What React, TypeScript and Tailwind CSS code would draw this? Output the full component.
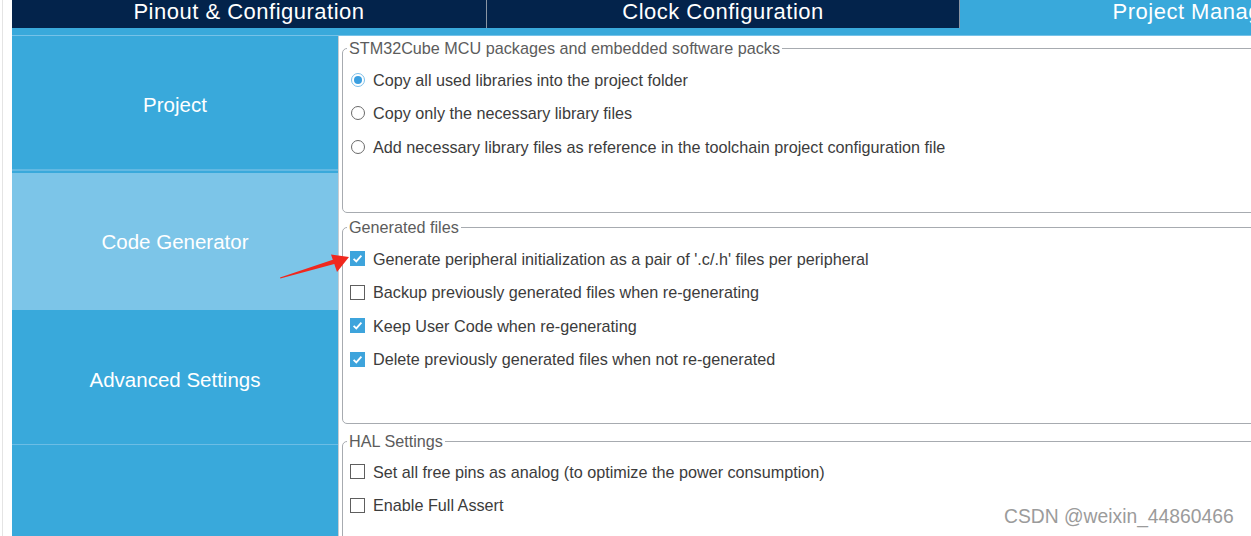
import React from 'react';

const BLUE = '#39a9db';

function Radio({ on }: { on?: boolean }) {
  return (
    <span className="w-[15px] h-[15px] shrink-0 flex items-center justify-center">
      {on ? (
        <span className="w-[14px] h-[14px] rounded-full border border-[#7cbfe9] bg-white flex items-center justify-center">
          <span className="w-[8px] h-[8px] rounded-full bg-[#3a9fe0]" />
        </span>
      ) : (
        <span className="w-[14px] h-[14px] rounded-full border border-[#6a6a6a] bg-white" />
      )}
    </span>
  );
}

function Check({ on }: { on?: boolean }) {
  if (!on) return <span className="w-[15px] h-[15px] shrink-0 border border-[#5e5e5e] bg-white" />;
  return (
    <span className="w-[15px] h-[15px] shrink-0 bg-[#3ea4dc] flex items-center justify-center">
      <svg width="15" height="15" viewBox="0 0 15 15">
        <path d="M3.6 7.8 L6.3 10.4 L11.4 4.7" fill="none" stroke="#fff" strokeWidth="1.8" />
      </svg>
    </span>
  );
}

function Row({ ctrl, label }: { ctrl: React.ReactNode; label: string }) {
  return (
    <div className="h-[33.5px] flex items-center gap-[8px] pl-[7px] text-[#3c3c3c] leading-[20px] whitespace-nowrap">
      {ctrl}
      <span>{label}</span>
    </div>
  );
}

function Group({ title, className, children }: { title: string; className: string; children: React.ReactNode }) {
  return (
    <fieldset className={`w-[960px] ml-[3px] border border-[#a7abb0] rounded-[5px] ${className}`}>
      <legend className="ml-[4px] px-[2px] leading-[20px] text-[#5c5c5c] whitespace-nowrap">{title}</legend>
      {children}
    </fieldset>
  );
}

export default function App() {
  return (
    <div className="relative w-[1251px] h-[536px] overflow-hidden flex bg-white font-['Liberation_Sans',Arial,sans-serif]">
      <div className="w-[12px] shrink-0 flex">
        <div className="ml-[2px] w-px bg-[#e4e4e4]" />
      </div>

      <div className="flex-1 min-w-0 flex flex-col">
        <div className="h-[28px] shrink-0 flex bg-[#03234b] text-white text-[22px] leading-[24px] tracking-[0.5px] whitespace-nowrap">
          <div className="w-[475px] shrink-0 flex justify-center border-r border-[#8a95a3]">Pinout &amp; Configuration</div>
          <div className="w-[473px] shrink-0 flex justify-center border-r border-[#8a95a3]">Clock Configuration</div>
          <div className="w-[474px] shrink-0 flex justify-center bg-[#39a9db]">Project Manager</div>
        </div>
        <div className="h-[8px] shrink-0 bg-[#39a9db] border-b border-[#76c2e8]" />

        <div className="flex-1 flex min-h-0">
          <nav className="w-[326px] shrink-0 flex flex-col text-white text-[20.5px]" style={{ background: BLUE }}>
            <div className="h-[135px] pt-[6px] flex items-center justify-center border-b-2 border-[#62b8e2]">Project</div>
            <div className="h-[137px] mt-[2px] pt-[2px] flex items-center justify-center bg-[#7cc5e8]">Code Generator</div>
            <div className="h-[135px] pt-[6px] flex items-center justify-center border-b border-[#6cbde5]">Advanced Settings</div>
            <div className="flex-1" />
          </nav>

          <main className="flex-1 min-w-0 overflow-hidden border-l border-[#c9cdd1] text-[16.2px]">
            <Group title="STM32Cube MCU packages and embedded software packs" className="mt-[2px] h-[175px] pt-[5px]">
              <Row ctrl={<Radio on />} label="Copy all used libraries into the project folder" />
              <Row ctrl={<Radio />} label="Copy only the necessary library files" />
              <Row ctrl={<Radio />} label="Add necessary library files as reference in the toolchain project configuration file" />
            </Group>

            <Group title="Generated files" className="mt-[4px] h-[207px] pt-[5px]">
              <Row ctrl={<Check on />} label="Generate peripheral initialization as a pair of '.c/.h' files per peripheral" />
              <Row ctrl={<Check />} label="Backup previously generated files when re-generating" />
              <Row ctrl={<Check on />} label="Keep User Code when re-generating" />
              <Row ctrl={<Check on />} label="Delete previously generated files when not re-generated" />
            </Group>

            <Group title="HAL Settings" className="mt-[7px] h-[140px] pt-[4px]">
              <Row ctrl={<Check />} label="Set all free pins as analog (to optimize the power consumption)" />
              <Row ctrl={<Check />} label="Enable Full Assert" />
            </Group>
          </main>
        </div>
      </div>

      <svg className="absolute inset-0 pointer-events-none" width="1251" height="536">
        <polygon
          points="280,277.4 332.8,259.7 331,254.5 349,257 337,272 334.3,264.1 280.3,278.6"
          fill="#f0281e"
        />
      </svg>

      <div className="absolute left-[1004px] top-[505px] leading-[24px] text-[19.3px] text-[#9b9b9b] whitespace-nowrap">
        CSDN @weixin_44860466
      </div>
    </div>
  );
}
